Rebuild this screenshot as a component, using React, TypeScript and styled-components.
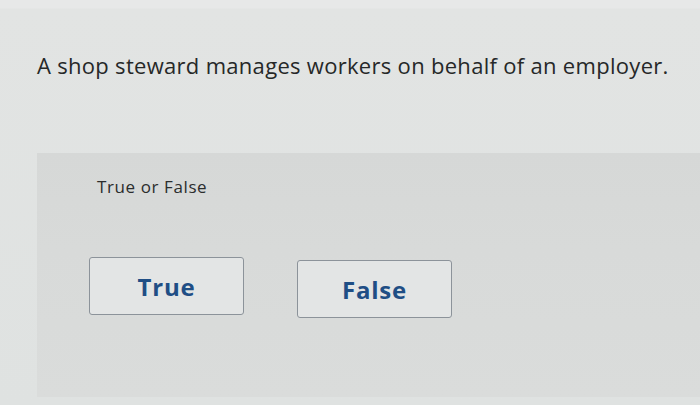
import React from "react";
import styled, { createGlobalStyle } from "styled-components";

const Global = createGlobalStyle`
  html, body { margin: 0; padding: 0; }
  body {
    width: 700px;
    height: 405px;
    overflow: hidden;
    background: #dfe1e0;
    font-family: "Open Sans", "Liberation Sans", sans-serif;
  }
`;

const Page = styled.div`
  width: 700px;
  height: 405px;
  box-sizing: border-box;
  display: flex;
  flex-direction: column;
  background: linear-gradient(180deg, #e7e8e8 0px, #e7e8e8 8px, #e2e4e3 9px, #dfe2e1 100%);
`;

const Question = styled.h1`
  margin: 0;
  padding: 51px 0 0 37px;
  height: 153px;
  box-sizing: border-box;
  font-family: "Open Sans", "Liberation Sans", sans-serif;
  font-size: 22px;
  line-height: 28px;
  font-weight: 400;
  color: #262828;
  letter-spacing: 0.3px;
  white-space: nowrap;
`;

const Panel = styled.section`
  margin-left: 37px;
  height: 244px;
  background: linear-gradient(180deg, #d6d8d7 0%, #d8dad9 40%, #dadcdb 100%);
  display: flex;
  flex-direction: column;
  padding: 23px 0 0 60px;
  box-sizing: border-box;
`;

const Prompt = styled.div`
  font-family: "Open Sans", "Liberation Sans", sans-serif;
  font-size: 17px;
  color: #2b2d2d;
  line-height: 22px;
  letter-spacing: 0.6px;
`;

const Choices = styled.div`
  display: flex;
  gap: 53px;
  margin-top: 59px;
  margin-left: -8px;
  align-items: flex-start;
`;

const Choice = styled.button<{ $offset: number }>`
  width: 155px;
  height: 58px;
  margin-top: ${(p) => p.$offset}px;
  box-sizing: border-box;
  border: 1px solid #8c939a;
  border-radius: 3px;
  background: #e3e5e5;
  color: #1f4e85;
  font-family: "Open Sans", "Liberation Sans", sans-serif;
  font-weight: 700;
  font-size: 24px;
  letter-spacing: 0.8px;
  display: flex;
  align-items: center;
  justify-content: center;
  cursor: pointer;
  padding: 0;
`;

export default function App() {
  return (
    <>
      <Global />
      <Page>
        <Question>A shop steward manages workers on behalf of an employer.</Question>
        <Panel>
          <Prompt>True or False</Prompt>
          <Choices>
            <Choice $offset={0}>True</Choice>
            <Choice $offset={3}>False</Choice>
          </Choices>
        </Panel>
      </Page>
    </>
  );
}
